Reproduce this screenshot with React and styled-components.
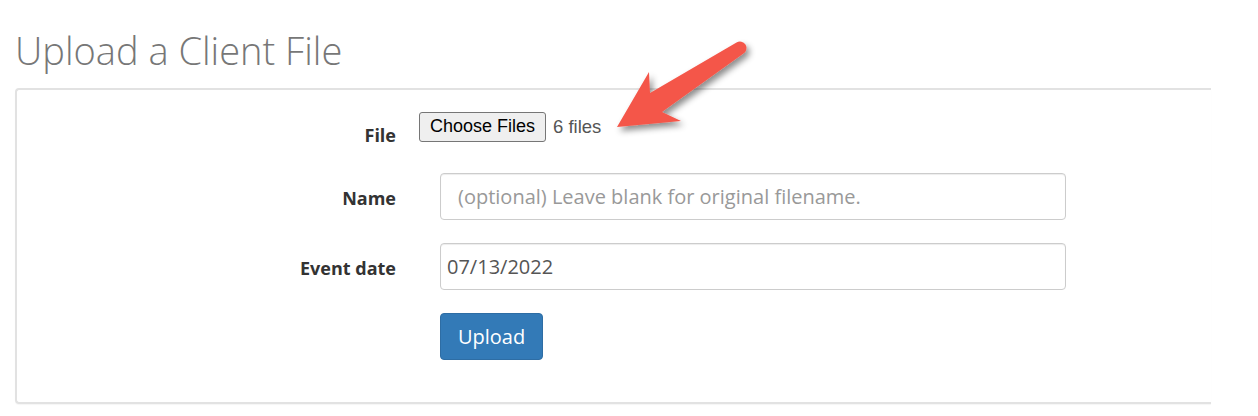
import React from 'react';
import styled, { createGlobalStyle } from 'styled-components';

const Global = createGlobalStyle`
    html, body {
        margin: 0;
        background: #fff;
    }
    body {
        font-family: 'Open Sans', 'Liberation Sans', sans-serif;
        color: #333;
    }
`;

const Page = styled.div`
    position: relative;
    width: 1258px;
    height: 416px;
    padding-left: 15px;
    box-sizing: border-box;
    overflow: hidden;
`;

const Title = styled.h2`
    margin: 30px 0 16px 0;
    font-family: 'Open Sans', sans-serif;
    font-weight: 300;
    font-size: 38px;
    line-height: 1.1;
    color: #777;
`;

const Panel = styled.div`
    width: 1196px;
    box-sizing: border-box;
    border: 2px solid #e2e2e2;
    border-right: none;
    border-radius: 4px 0 0 4px;
    padding: 22px 0 42px 0;
    box-shadow: 0 1px 1px rgba(0, 0, 0, 0.04);
`;

const Form = styled.form`
    display: flex;
    flex-direction: column;
    gap: 23px;
`;

const Row = styled.div`
    display: grid;
    grid-template-columns: 379px 626px;
    column-gap: 44px;
    align-items: ${p => p.$align || 'center'};
    min-height: ${p => p.$height || 47}px;
    margin-bottom: ${p => p.$after || 0}px;
`;

const Label = styled.label`
    text-align: right;
    font-weight: 700;
    font-size: 18px;
    line-height: 20px;
    color: #333;
    padding-top: ${p => p.$drop || 0}px;
`;

const FileCell = styled.div`
    display: flex;
    align-items: center;
    margin-left: -21px;
    align-self: flex-start;
`;

const ChooseButton = styled.button`
    height: 30px;
    padding: 0 10px;
    border: 1px solid #767676;
    border-radius: 3px;
    background: #efefef;
    font-family: 'Liberation Sans', Arial, sans-serif;
    font-size: 18px;
    color: #000;
`;

const FileCount = styled.span`
    margin-left: 7px;
    font-family: 'Liberation Sans', Arial, sans-serif;
    font-size: 18.5px;
    color: #555;
`;

const TextInput = styled.input`
    width: 626px;
    height: 47px;
    box-sizing: border-box;
    border: 1px solid #ccc;
    border-radius: 4px;
    padding: 0 ${p => p.$pad || 17}px;
    font-family: 'Open Sans', sans-serif;
    font-size: 20px;
    color: #555;
    box-shadow: inset 0 1px 1px rgba(0, 0, 0, 0.075);
    outline: none;

    &::placeholder {
        color: #999;
    }
`;

const Spacer = styled.div``;

const UploadButton = styled.button`
    width: 103px;
    height: 47px;
    padding: 0;
    border: 1px solid #2e6da4;
    border-radius: 4px;
    background: #337ab7;
    color: #fff;
    font-family: 'Open Sans', sans-serif;
    font-size: 20px;
    cursor: pointer;
`;

const Arrow = styled.svg`
    position: absolute;
    left: 600px;
    top: 30px;
    width: 160px;
    height: 120px;
    overflow: visible;
    pointer-events: none;
`;

const App = () => {
    return (
        <Page>
            <Global />
            <Title>Upload a Client File</Title>
            <Panel>
                <Form onSubmit={e => e.preventDefault()}>
                    <Row $height={33} $align="end" $after={5}>
                        <Label>File</Label>
                        <FileCell>
                            <ChooseButton type="button">Choose Files</ChooseButton>
                            <FileCount>6 files</FileCount>
                        </FileCell>
                    </Row>
                    <Row>
                        <Label $drop={3}>Name</Label>
                        <TextInput placeholder="(optional) Leave blank for original filename." />
                    </Row>
                    <Row>
                        <Label $drop={3}>Event date</Label>
                        <TextInput $pad={6} defaultValue="07/13/2022" />
                    </Row>
                    <Row>
                        <Spacer />
                        <div>
                            <UploadButton type="submit">Upload</UploadButton>
                        </div>
                    </Row>
                </Form>
            </Panel>
            <Arrow viewBox="0 0 160 120">
                <defs>
                    <filter id="arrowShadow" x="-30%" y="-30%" width="160%" height="160%">
                        <feDropShadow dx="3" dy="4" stdDeviation="3" floodColor="#000" floodOpacity="0.45" />
                    </filter>
                </defs>
                <path
                    d="M17,97 L49,42 L50,63 L136.5,12.5 A6.5,6.5 0 0 1 143.5,23.5 L62,82 L81,91 Z"
                    fill="#f4574a"
                    strokeLinejoin="round"
                    filter="url(#arrowShadow)"
                />
            </Arrow>
        </Page>
    );
};

export default App;
